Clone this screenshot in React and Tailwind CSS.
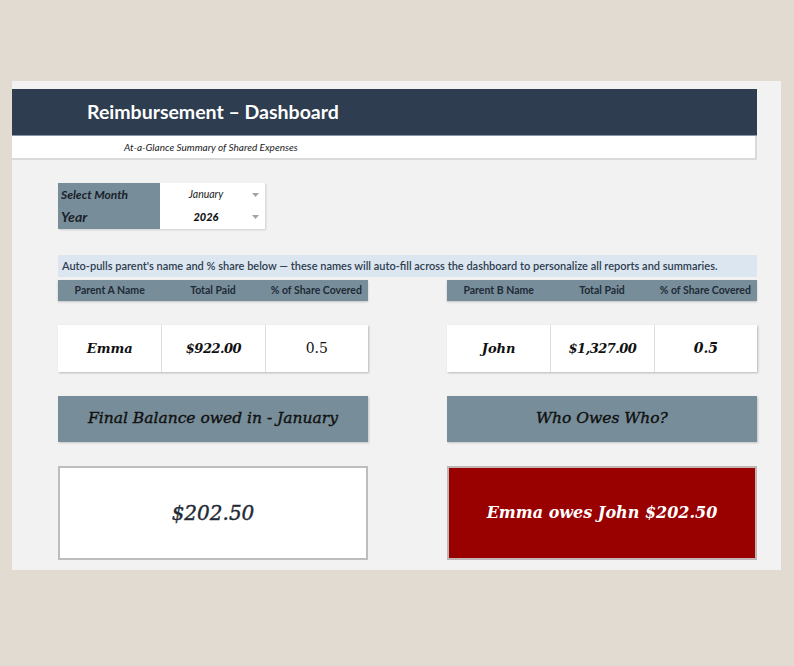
import React from 'react';

const sans = "font-['Lato','Liberation_Sans',sans-serif]";
const serif = "font-['DejaVu_Serif','Liberation_Serif',serif]";

const parentA = { label: 'Parent A Name', name: 'Emma', paid: '$922.00', share: '0.5' };
const parentB = { label: 'Parent B Name', name: 'John', paid: '$1,327.00', share: '0.5' };

function Caret() {
  return (
    <svg width="7" height="4" viewBox="0 0 7 4" className="shrink-0">
      <path d="M0 0 L7 0 L3.5 4 Z" fill="#a3a3a3" />
    </svg>
  );
}

function ParentTable({ parent, shareItalic }) {
  return (
    <div className="w-[310px]">
      <div className={`grid grid-cols-3 h-[21px] items-center bg-[#778e9a] text-[10.5px] font-bold text-[#1f2a36] shadow-[0_1px_2px_rgba(0,0,0,0.2)] ${sans}`}>
        <div className="text-center">{parent.label}</div>
        <div className="text-center">Total Paid</div>
        <div className="text-center">% of Share Covered</div>
      </div>
      <div className={`mt-[24px] grid grid-cols-3 h-[47px] bg-white shadow-[1px_1px_2px_rgba(0,0,0,0.25)] text-[#111] ${serif}`}>
        <div className="flex items-center justify-center text-[13px] italic font-bold">{parent.name}</div>
        <div className="flex items-center justify-center border-l border-[#dedede] text-[13px] italic font-bold tracking-[-0.5px]">{parent.paid}</div>
        <div className={`flex items-center justify-center border-l border-[#dedede] text-[14px] ${shareItalic ? 'italic font-bold' : ''}`}>{parent.share}</div>
      </div>
    </div>
  );
}

export default function App() {
  return (
    <div className="w-[794px] h-[666px] bg-[#e2dbd2] pt-[81px] pl-[12px]">
      <div className="w-[769px] h-[489px] bg-[#f2f2f2] pt-[8px]">
        {/* title bar */}
        <div className="w-[745px] h-[47px] bg-[#2e3d4f] flex items-center pl-[75px] border-b border-[#8896a5]">
          <h1 className={`text-white text-[19.5px] font-bold ${sans}`}>Reimbursement – Dashboard</h1>
        </div>
        <div className="w-[745px] h-[24px] bg-white flex items-center pl-[112px] border-b-2 border-r-2 border-[#dadada]">
          <p className={`text-[10px] italic text-[#222] ${sans}`}>At-a-Glance Summary of Shared Expenses</p>
        </div>

        <div className="ml-[46px] w-[699px]">
          {/* month / year pickers */}
          <div className={`mt-[23px] w-[207px] h-[46px] flex shadow-[1px_1px_2px_rgba(0,0,0,0.15)] ${sans}`}>
            <div className="w-[102px] bg-[#778e9a] flex flex-col justify-center pl-[3px] text-[#1a1f29] italic font-bold">
              <div className="text-[12px] leading-[22px]">Select Month</div>
              <div className="text-[14px] leading-[22px]">Year</div>
            </div>
            <div className="flex-1 bg-white flex flex-col justify-center">
              <div className="flex items-center h-[22px] pr-[6px]">
                <span className="flex-1 text-center text-[10.5px] italic text-[#222]">January</span>
                <Caret />
              </div>
              <div className="flex items-center h-[22px] pr-[6px]">
                <span className="flex-1 text-center text-[11px] italic font-black text-[#111]">2026</span>
                <Caret />
              </div>
            </div>
          </div>

          {/* note */}
          <div className={`mt-[26px] h-[22px] bg-[#dce6f0] flex items-center pl-[4px] text-[11px] font-semibold text-[#2e3d4f] ${sans}`}>
            Auto-pulls parent's name and % share below — these names will auto-fill across the dashboard to personalize all reports and summaries.
          </div>

          {/* parent tables */}
          <div className="mt-[3px] flex justify-between">
            <ParentTable parent={parentA} />
            <ParentTable parent={parentB} shareItalic />
          </div>

          {/* section headings */}
          <div className={`mt-[24px] flex justify-between ${serif}`}>
            <div className="w-[310px] h-[46px] bg-[#778e9a] flex items-center justify-center text-[15.5px] italic text-[#111] [-webkit-text-stroke:0.4px_#111] shadow-[1px_1px_2px_rgba(0,0,0,0.2)]">
              Final Balance owed in - January
            </div>
            <div className="w-[310px] h-[46px] bg-[#778e9a] flex items-center justify-center text-[15.5px] italic text-[#111] [-webkit-text-stroke:0.4px_#111] shadow-[1px_1px_2px_rgba(0,0,0,0.2)]">
              Who Owes Who?
            </div>
          </div>

          {/* results */}
          <div className={`mt-[24px] flex justify-between ${serif}`}>
            <div className="w-[310px] h-[94px] bg-white border-2 border-[#bdbdbd] flex items-center justify-center text-[20px] italic text-[#1f2a36] [-webkit-text-stroke:0.4px_#1f2a36]">
              $202.50
            </div>
            <div className="w-[310px] h-[94px] bg-[#990000] border-2 border-[#c0b4b4] flex items-center justify-center text-[16px] italic font-bold text-white">
              Emma owes John $202.50
            </div>
          </div>
        </div>
      </div>
    </div>
  );
}
